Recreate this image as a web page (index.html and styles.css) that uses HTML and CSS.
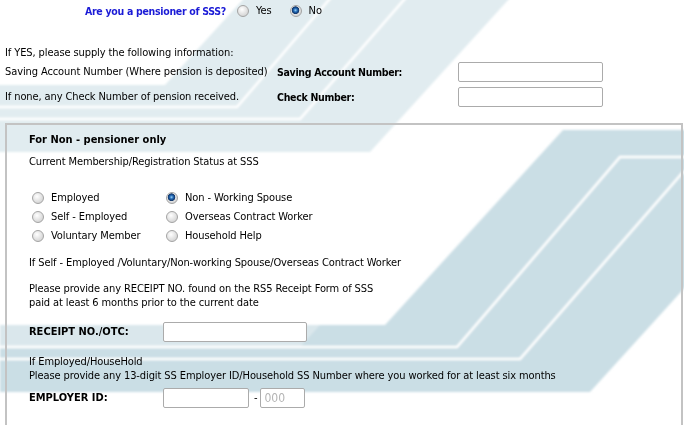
FILE: index.html
```html
<!DOCTYPE html>
<html lang="en">
<head>
<meta charset="utf-8">
<title>SSS Pensioner Form</title>
<link rel="stylesheet" href="styles.css">
</head>
<body>
<svg class="watermark" width="684" height="425" viewBox="0 0 684 425" aria-hidden="true">
  <defs>
    <filter id="soft" x="-5%" y="-5%" width="110%" height="110%"><feGaussianBlur stdDeviation="1.1"/></filter>
  </defs>
  <g filter="url(#soft)">
    <g transform="translate(-220,-240)">
      <polygon class="wm-upper" points="0,325 385,325 563,130 828,130 590,392 0,392"/>
      <polyline class="wm-line" points="0,347 457,347 620,157 760,157"/>
      <polyline class="wm-line" points="0,359 520,359 684,171 800,171"/>
    </g>
    <polygon class="wm-lower" points="0,325 385,325 563,130 700,130 700,271 590,392 0,392"/>
    <polygon class="wm-lower-top" points="0,325 320,325 300,347 0,347"/>
    <polyline class="wm-line" points="0,347 457,347 620,157 700,157"/>
    <polyline class="wm-line" points="0,359 520,359 684,171"/>
  </g>
</svg>

<main class="page">
  <div class="q-row">
    <span class="q">Are you a pensioner of SSS?</span>
    <label class="opt"><input class="radio" type="radio" name="pensioner"> Yes</label>
    <label class="opt"><input class="radio" type="radio" name="pensioner" checked> No</label>
  </div>

  <div class="pension">
    <p class="intro">If YES, please supply the following information:</p>
    <div class="prow">
      <span>Saving Account Number (Where pension is deposited)</span>
      <span class="plabel">Saving Account Number:</span>
      <input class="txt" type="text">
    </div>
    <div class="prow">
      <span>If none, any Check Number of pension received.</span>
      <span class="plabel">Check Number:</span>
      <input class="txt" type="text">
    </div>
  </div>

  <section class="box">
    <p class="title">For Non - pensioner only</p>
    <p class="sub">Current Membership/Registration Status at SSS</p>
    <div class="status">
      <label class="opt"><input class="radio" type="radio" name="status"> Employed</label>
      <label class="opt"><input class="radio" type="radio" name="status"> Self - Employed</label>
      <label class="opt"><input class="radio" type="radio" name="status"> Voluntary Member</label>
      <label class="opt"><input class="radio" type="radio" name="status" checked> Non - Working Spouse</label>
      <label class="opt"><input class="radio" type="radio" name="status"> Overseas Contract Worker</label>
      <label class="opt"><input class="radio" type="radio" name="status"> Household Help</label>
    </div>
    <p class="note1">If Self - Employed /Voluntary/Non-working Spouse/Overseas Contract Worker</p>
    <p class="note2">Please provide any RECEIPT NO. found on the RS5 Receipt Form of SSS<br>paid at least 6 months prior to the current date</p>
    <div class="frow receipt">
      <span class="flabel">RECEIPT NO./OTC:</span>
      <input class="txt w144" type="text">
    </div>
    <p class="note3">If Employed/HouseHold<br>Please provide any 13-digit SS Employer ID/Household SS Number where you worked for at least six months</p>
    <div class="frow emp">
      <span class="flabel">EMPLOYER ID:</span>
      <input class="txt w86" type="text">
      <span class="dash">-</span>
      <input class="txt w45" type="text" placeholder="000">
    </div>
  </section>
</main>
</body>
</html>
```

FILE: styles.css
```css
html {
  background: #fff;
}

body {
  margin: 0;
  width: 684px;
  height: 425px;
  overflow: hidden;
  position: relative;
  font-family: "DejaVu Sans Condensed", "DejaVu Sans", sans-serif;
  font-size: 11px;
  line-height: 14px;
  letter-spacing: -0.1px;
  color: #000;
}

/* decorative watermark behind the form */
.watermark {
  position: absolute;
  left: 0;
  top: 0;
  z-index: 0;
}

.wm-upper {
  fill: #e1ecf0;
}

.wm-lower {
  fill: #cadee5;
}

.wm-lower-top {
  fill: #dae7ec;
}

.wm-line {
  fill: none;
  stroke: #fff;
  stroke-width: 2.5;
}

.page {
  position: relative;
  z-index: 1;
}

p {
  margin: 0;
}

/* question row */
.q-row {
  display: flex;
  align-items: center;
  height: 21px;
  padding-left: 85px;
}

.q {
  font-weight: bold;
  font-size: 10.5px;
  letter-spacing: -0.3px;
  color: #1a1ad6;
  margin-right: 11px;
}

.opt {
  display: inline-flex;
  align-items: center;
}

.q-row .opt + .opt {
  margin-left: 18px;
}

.radio {
  appearance: none;
  -webkit-appearance: none;
  box-sizing: border-box;
  width: 12px;
  height: 12px;
  margin: 0 7px 0 0;
  border-radius: 50%;
  border: 1px solid #a3a3a3;
  background: radial-gradient(circle at 40% 35%, #ffffff 0, #e6e6e6 45%, #c9c9c9 100%);
}

.radio:checked {
  background:
    radial-gradient(circle at 45% 42%, #9fd2f5 0, #2a73bd 1.6px, #123f7c 3px, #1b3d6a 3.6px, transparent 4.1px),
    radial-gradient(circle at 40% 35%, #ffffff 0, #e6e6e6 45%, #c9c9c9 100%);
}

/* pensioner block */
.pension {
  padding-left: 5px;
  margin-top: 25px;
}

.prow {
  display: grid;
  grid-template-columns: 272px 181px 145px;
  align-items: center;
  height: 20px;
  margin-top: 2px;
}

.prow + .prow {
  margin-top: 5px;
}

.plabel {
  font-weight: bold;
  font-size: 10.5px;
  letter-spacing: -0.3px;
}

.txt {
  box-sizing: border-box;
  height: 20px;
  margin: 0;
  padding: 0 3px;
  border: 1px solid #ababab;
  border-radius: 2px;
  background: #fff;
  font-family: "DejaVu Sans Condensed", "DejaVu Sans", sans-serif;
  font-size: 12px;
  color: #000;
}

.txt::placeholder {
  color: #b4b4b4;
}

.w144 {
  width: 144px;
}

.w86 {
  width: 86px;
}

.w45 {
  width: 45px;
}

/* non-pensioner box */
.box {
  box-sizing: border-box;
  margin: 16px 0 0 5px;
  width: 678px;
  height: 310px;
  border: 2px solid #c3c3c3;
  border-bottom: none;
  padding: 8px 0 0 22px;
}

.title {
  font-weight: bold;
  letter-spacing: 0;
}

.sub {
  margin-top: 8px;
}

.status {
  display: grid;
  grid-template-columns: 134px auto;
  grid-template-rows: repeat(3, 19px);
  grid-auto-flow: column;
  align-items: center;
  margin-top: 19px;
  padding-left: 3px;
}

.note1 {
  margin-top: 11px;
}

.note2 {
  margin-top: 12px;
}

.frow {
  display: flex;
  align-items: center;
  height: 20px;
}

.frow.receipt {
  margin-top: 12px;
}

.frow.emp {
  margin-top: 5px;
}

.flabel {
  width: 134px;
  font-weight: bold;
  letter-spacing: 0;
}

.note3 {
  margin-top: 13px;
}

.dash {
  margin: 0 3px 0 5px;
}
```
